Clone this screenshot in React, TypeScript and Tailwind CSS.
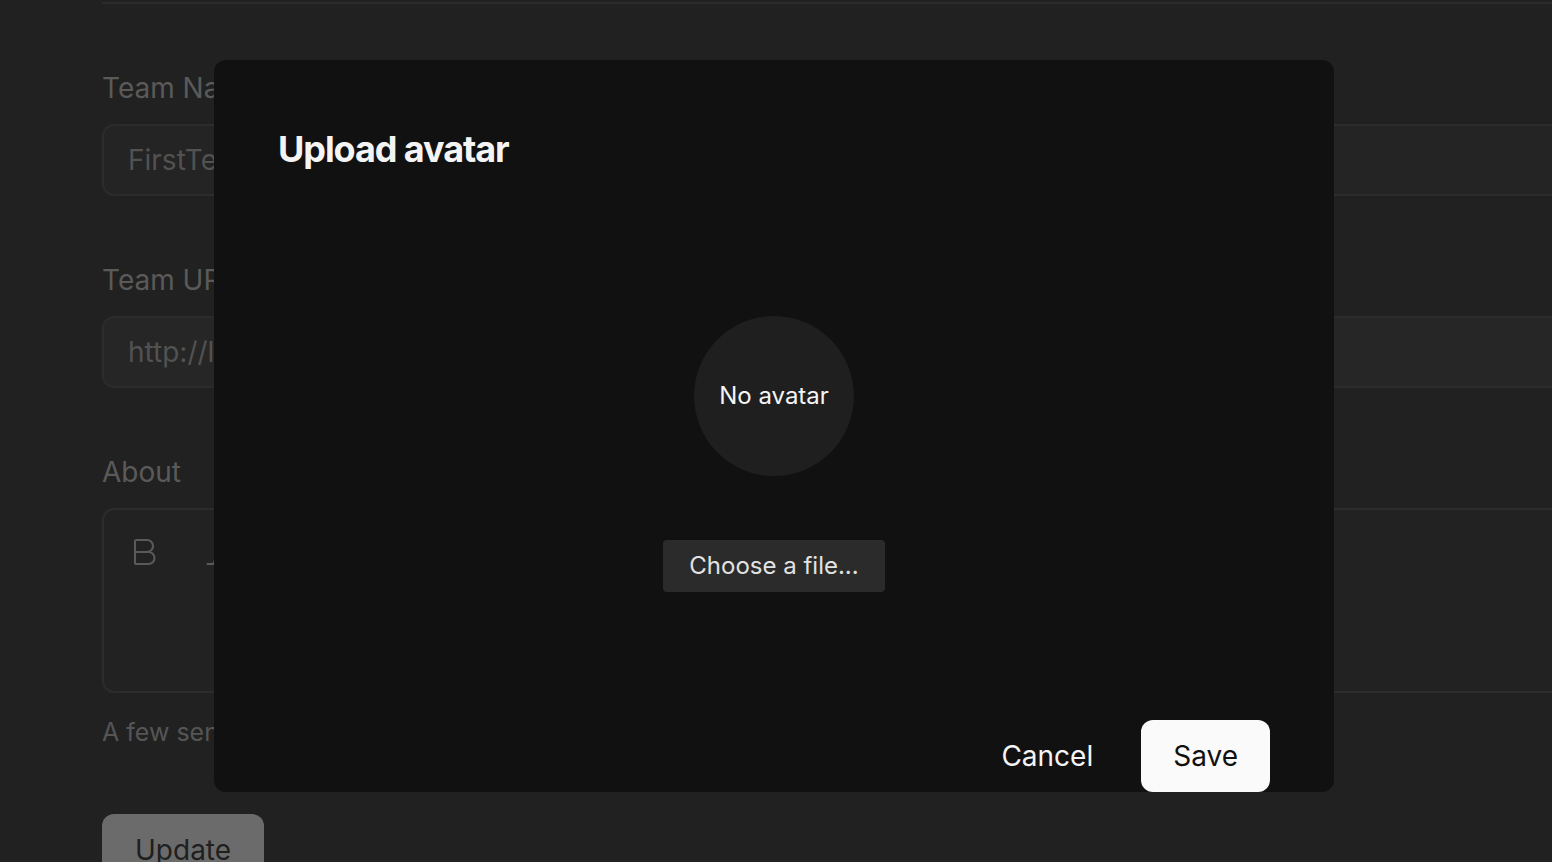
import { Bold, Italic } from 'lucide-react'

export default function App() {
  return (
    <div className="relative h-[862px] w-full overflow-hidden bg-[#212121] font-['Inter',sans-serif]">
      {/* Page behind the dialog */}
      <div className="w-[1700px] pl-[102px]">
        <div className="mt-[2px] h-[2px] bg-[#2c2c2c]" />

        <label className="mt-[64px] block text-[28px] leading-[40px] text-[#5a5a5a]">Team Name</label>
        <div className="mt-[16px] flex h-[72px] items-center rounded-[12px] border-2 border-[#2c2c2c] bg-[#242424] pl-6 text-[28px] text-[#525252]">
          FirstTeam
        </div>

        <label className="mt-[64px] block text-[28px] leading-[40px] text-[#5a5a5a]">Team URL</label>
        <div className="mt-[16px] flex h-[72px] items-center rounded-[12px] border-2 border-[#2c2c2c] bg-[#262626] pl-6 text-[28px] text-[#525252]">
          http://localhost/team/firstteam
        </div>

        <label className="mt-[64px] block text-[28px] leading-[40px] text-[#5a5a5a]">About</label>
        <div className="mt-[16px] h-[185px] rounded-[12px] border-2 border-[#2c2c2c] bg-[#222222]">
          <div className="flex gap-[38px] pl-[22px] pt-[24px] text-[#5a5a5a]">
            <Bold size={36} strokeWidth={1.4} />
            <Italic size={36} strokeWidth={1.4} />
          </div>
        </div>

        <p className="mt-[21px] text-[25px] leading-[36px] text-[#555555]">A few sentences about your team.</p>

        <button className="mt-[64px] flex h-[72px] items-center rounded-[12px] bg-[#6b6b6b] px-[33px] text-[28px] text-[#1f1f1f]">
          Update
        </button>
      </div>

      {/* Dialog */}
      <div className="absolute left-[214px] top-[60px] flex h-[732px] w-[1120px] flex-col rounded-[12px] bg-[#111111] px-16">
        <h2 className="mt-[67px] text-[36px] font-bold leading-[44px] tracking-[-0.03em] text-[#f4f4f5]">
          Upload avatar
        </h2>

        <div className="mt-[145px] flex flex-col items-center">
          <div className="flex h-[160px] w-[160px] items-center justify-center rounded-full bg-[#1f1f1f] text-[24px] text-[#f5f5f5]">
            No avatar
          </div>
          <button className="mt-16 flex h-[52px] items-center rounded-[4px] bg-[#2b2b2b] px-[26px] text-[24px] text-[#e2e2e2]">
            Choose a file...
          </button>
        </div>

        <div className="mt-auto flex justify-end gap-4">
          <button className="flex h-[72px] items-center px-8 text-[28px] text-[#f4f4f4]">Cancel</button>
          <button className="flex h-[72px] items-center rounded-[12px] bg-[#fafafa] px-8 text-[28px] text-[#111111]">
            Save
          </button>
        </div>
      </div>
    </div>
  )
}
